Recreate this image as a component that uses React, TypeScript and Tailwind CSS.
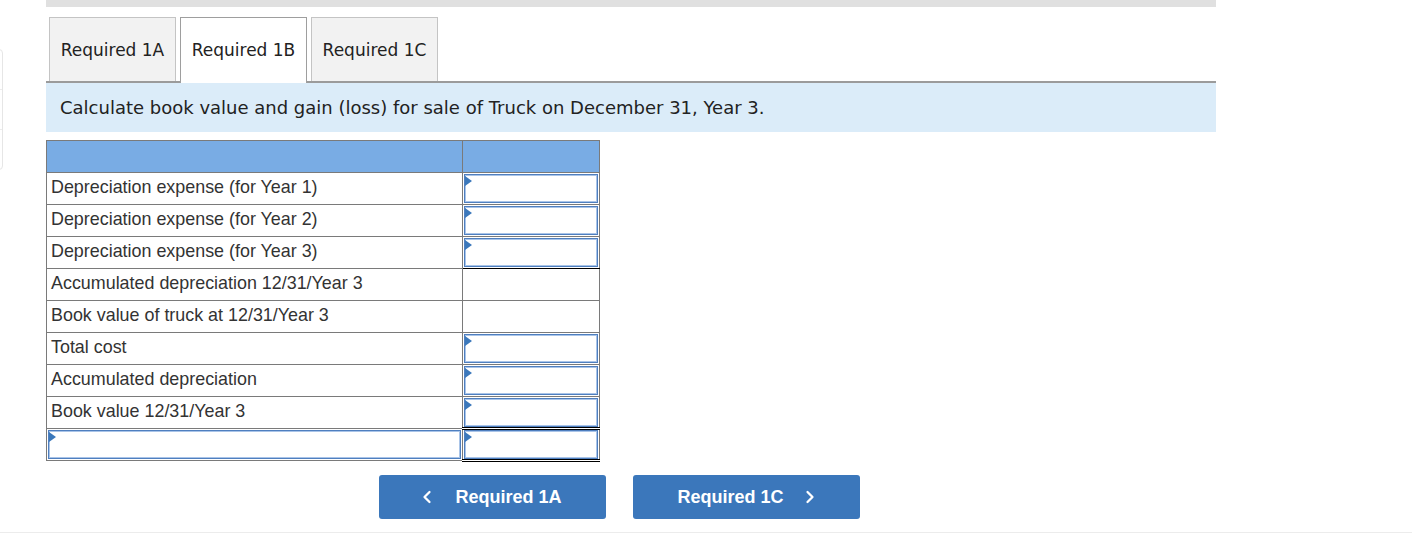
import { ChevronLeft, ChevronRight } from 'lucide-react';

type Row = {
  label: string;
  input: boolean;
  bottom?: 'black' | 'double';
};

const ROWS: Row[] = [
  { label: 'Depreciation expense (for Year 1)', input: true },
  { label: 'Depreciation expense (for Year 2)', input: true },
  { label: 'Depreciation expense (for Year 3)', input: true, bottom: 'black' },
  { label: 'Accumulated depreciation 12/31/Year 3', input: false },
  { label: 'Book value of truck at 12/31/Year 3', input: false },
  { label: 'Total cost', input: true },
  { label: 'Accumulated depreciation', input: true, bottom: 'black' },
  { label: 'Book value 12/31/Year 3', input: true, bottom: 'double' },
];

function InputBox() {
  return (
    <div className="relative h-[29px] mx-[1px] border border-[#4f7fbf] shadow-[inset_0_0_0_1px_#a9c4e8] bg-white">
      {/* little marker triangle */}
      <span className="absolute left-0 top-[1px] w-0 h-0 border-y-[5px] border-y-transparent border-l-[7px] border-l-[#3b78bb]" />
    </div>
  );
}

function Tab({ label, active }: { label: string; active?: boolean }) {
  return (
    <div
      className={`w-[127px] flex items-center justify-center pt-[3px] text-[17px] text-[#222] ${
        active
          ? 'bg-white border border-b-0 border-[#9e9e9e] -mb-[2px] h-[66px] pb-[2px]'
          : 'bg-[#f2f2f2] border border-b-0 border-[#c4c4c4] h-[64px]'
      }`}
    >
      {label}
    </div>
  );
}

export default function App() {
  return (
    <div className="relative w-[1412px] h-[539px] bg-white overflow-hidden" style={{ fontFamily: '"Liberation Sans", Arial, sans-serif' }}>
      {/* partially hidden side panel */}
      <div className="absolute left-[-40px] top-[49px] w-[43px] h-[121px] rounded-[4px] border border-[#e6e6e6] flex flex-col">
        <div className="flex-1 border-b border-[#ececec]" />
        <div className="flex-1 border-b border-[#ececec]" />
        <div className="flex-1" />
      </div>

      <div className="ml-[46px] w-[1170px]">
        <div className="h-[7px] bg-[#e0e0e0]" />

        <div
          className="flex items-end gap-[4px] pl-[3px] pt-[10px] border-b-2 border-[#9b9b9b]"
          style={{ fontFamily: '"DejaVu Sans", Verdana, sans-serif' }}
        >
          <Tab label="Required 1A" />
          <Tab label="Required 1B" active />
          <Tab label="Required 1C" />
        </div>

        <div
          className="h-[49px] bg-[#dbecf9] px-[14px] flex items-center text-[18px] text-[#222]"
          style={{ fontFamily: '"DejaVu Sans", Verdana, sans-serif' }}
        >
          Calculate book value and gain (loss) for sale of Truck on December 31, Year 3.
        </div>

        <table className="mt-[8px] border-collapse text-[17.9px] text-[#333]">
          <tbody>
            <tr>
              <td className="w-[416px] h-[32px] p-0 bg-[#79ace4] border border-[#7a7a7a]" />
              <td className="w-[137px] h-[32px] p-0 bg-[#79ace4] border border-[#7a7a7a]" />
            </tr>
            {ROWS.map((r) => (
              <tr key={r.label}>
                <td className="h-[32px] p-0 pl-[4px] pb-[2px] border border-[#7a7a7a] leading-none">{r.label}</td>
                <td
                  className={`h-[32px] p-0 border border-[#7a7a7a] ${
                    r.bottom === 'black'
                      ? 'border-b-black'
                      : r.bottom === 'double'
                        ? 'border-b-[3px] border-b-black border-double'
                        : ''
                  }`}
                >
                  {r.input && <InputBox />}
                </td>
              </tr>
            ))}
            <tr>
              <td className="h-[31px] p-0 border border-[#7a7a7a]">
                <InputBox />
              </td>
              <td className="h-[31px] p-0 border border-[#7a7a7a] border-b-[3px] border-b-black border-double">
                <InputBox />
              </td>
            </tr>
          </tbody>
        </table>

        <div className="flex gap-[27px] mt-[13px] ml-[333px]">
          <button className="w-[227px] h-[44px] rounded-[3px] bg-[#3b77bb] text-white font-bold text-[18px] flex items-center justify-center gap-[18px]">
            <ChevronLeft size={20} strokeWidth={2.75} className="-ml-[6px]" />
            <span>Required 1A</span>
          </button>
          <button className="w-[227px] h-[44px] rounded-[3px] bg-[#3b77bb] text-white font-bold text-[18px] flex items-center justify-center gap-[16px]">
            <span>Required 1C</span>
            <ChevronRight size={20} strokeWidth={2.75} className="-mr-[4px]" />
          </button>
        </div>
      </div>

      <div className="mt-[13px] border-t border-[#ececec]" />
    </div>
  );
}
